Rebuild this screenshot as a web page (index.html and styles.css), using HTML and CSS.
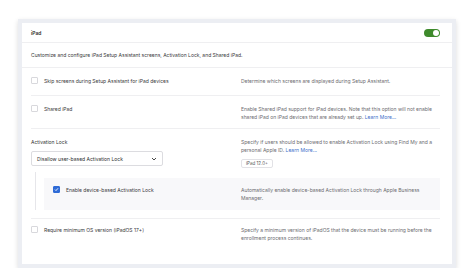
FILE: index.html
```html
<!DOCTYPE html>
<html>
<head>
	<meta charset="UTF-8">
	<title>iPad</title>
	<link rel="stylesheet" href="styles.css">
</head>
<body>

<div class="frame">
	<div class="card">
		<div class="head">
			<span class="title">iPad</span>
			<span class="toggle"><b></b></span>
		</div>
		<div class="intro">Customize and configure iPad Setup Assistant screens, Activation Lock, and Shared iPad.</div>

		<div class="rows">
			<div class="row">
				<div class="check"><span class="box"></span>Skip screens during Setup Assistant for iPad devices</div>
				<p class="help">Determine which screens are displayed during Setup Assistant.</p>
			</div>

			<div class="row">
				<div class="check"><span class="box"></span>Shared iPad</div>
				<p class="help">Enable Shared iPad support for iPad devices. Note that this option will not enable shared iPad on iPad devices that are already set up. <a href="#">Learn More...</a></p>
			</div>

			<div class="section">
				<div class="row plain">
					<div>
						<div class="label">Activation Lock</div>
						<div class="select">
							<span>Disallow user-based Activation Lock</span>
							<svg width="6" height="4" viewBox="0 0 6 4"><path d="M1 1l2 2 2-2" fill="none" stroke="#333" stroke-width="0.9"/></svg>
						</div>
					</div>
					<div>
						<p class="help">Specify if users should be allowed to enable Activation Lock using Find My and a personal Apple ID. <a href="#">Learn More...</a></p>
						<div class="tag">iPad 12.0+</div>
					</div>
				</div>
				<div class="nested">
					<div class="panel">
						<div class="check"><span class="box on"><svg width="5" height="5" viewBox="0 0 5 5"><path d="M1 2.6l1 1 2-2.3" fill="none" stroke="#fff" stroke-width="0.9"/></svg></span>Enable device-based Activation Lock</div>
						<p class="help">Automatically enable device-based Activation Lock through Apple Business Manager.</p>
					</div>
				</div>
			</div>

			<div class="row last">
				<div class="check"><span class="box"></span>Require minimum OS version (iPadOS 17+)</div>
				<p class="help">Specify a minimum version of iPadOS that the device must be running before the enrollment process continues.</p>
			</div>
		</div>
	</div>
</div>

</body>
</html>
```

FILE: styles.css
```css
html, body
{
	margin: 0;
	padding: 0;
	background-color: #fff;
	color: #3a3a3c;
	font-family: "Inter", "Noto Sans", sans-serif;
	font-size: 5px;
	line-height: 8px;
}

.frame
{
	margin: 19px 18px 0;
	border: 4px solid #eceef3;
	box-shadow: 0 2px 5px rgba(0, 0, 0, 0.14);
}

.card
{
	background-color: #fff;
}

.head
{
	display: flex;
	align-items: center;
	justify-content: space-between;
	height: 19px;
	padding: 0 12px 0 9px;
	border-bottom: 1px solid #efeff1;
}
.title
{
	font-weight: 600;
	color: #2b2b2d;
}
.toggle
{
	display: flex;
	justify-content: flex-end;
	align-items: center;
	width: 16px;
	height: 8px;
	padding: 0 1px;
	box-sizing: border-box;
	border-radius: 4px;
	background-color: #3e8a2c;
}
.toggle b
{
	width: 6px;
	height: 6px;
	border-radius: 50%;
	background-color: #fff;
}

.intro
{
	height: 24px;
	display: flex;
	align-items: center;
	padding: 0 9px;
	border-bottom: 1px solid #efeff1;
}

.rows
{
	padding: 0 12px 15px 9px;
}

.row
{
	display: grid;
	grid-template-columns: 1fr 199px;
	padding: 9px 0 7px;
	border-bottom: 1px solid #efeff1;
}
.row:first-child
{
	padding-bottom: 10px;
}
.row.plain
{
	padding: 0;
	border: none;
}
.row.last
{
	padding-top: 7px;
	border: none;
}

.check
{
	display: flex;
	align-items: flex-start;
}
.box
{
	flex: none;
	display: flex;
	align-items: center;
	justify-content: center;
	width: 7px;
	height: 7px;
	margin-right: 6px;
	box-sizing: border-box;
	border: 1px solid #d8d8dc;
	border-radius: 1px;
	background-color: #fff;
}
.box.on
{
	border-color: #2f6bd6;
	background-color: #2f6bd6;
}

.help
{
	margin: 0;
	color: #6c6c70;
}
.help a
{
	color: #3d6fc9;
	text-decoration: none;
}

.section
{
	padding: 9px 0 8px;
	border-bottom: 1px solid #efeff1;
}
.label
{
	color: #333;
}
.select
{
	display: flex;
	align-items: center;
	justify-content: space-between;
	width: 132px;
	height: 15px;
	margin-top: 5px;
	padding: 0 5px;
	box-sizing: border-box;
	border: 1px solid #dcdce0;
	border-radius: 2px;
	color: #2e2e30;
}
.tag
{
	width: max-content;
	margin-top: 5px;
	padding: 0 4px;
	border: 1px solid #e2e2e6;
	border-radius: 2px;
	font-size: 4.5px;
	line-height: 7px;
	color: #555;
}

.nested
{
	margin: 4px 0 0 4px;
	padding: 6px 0 0 8px;
	border-left: 1px solid #e6e6ea;
}
.panel
{
	display: grid;
	grid-template-columns: 1fr 199px;
	padding: 8px 0 8px 9px;
	background-color: #f8f8fa;
}
```
